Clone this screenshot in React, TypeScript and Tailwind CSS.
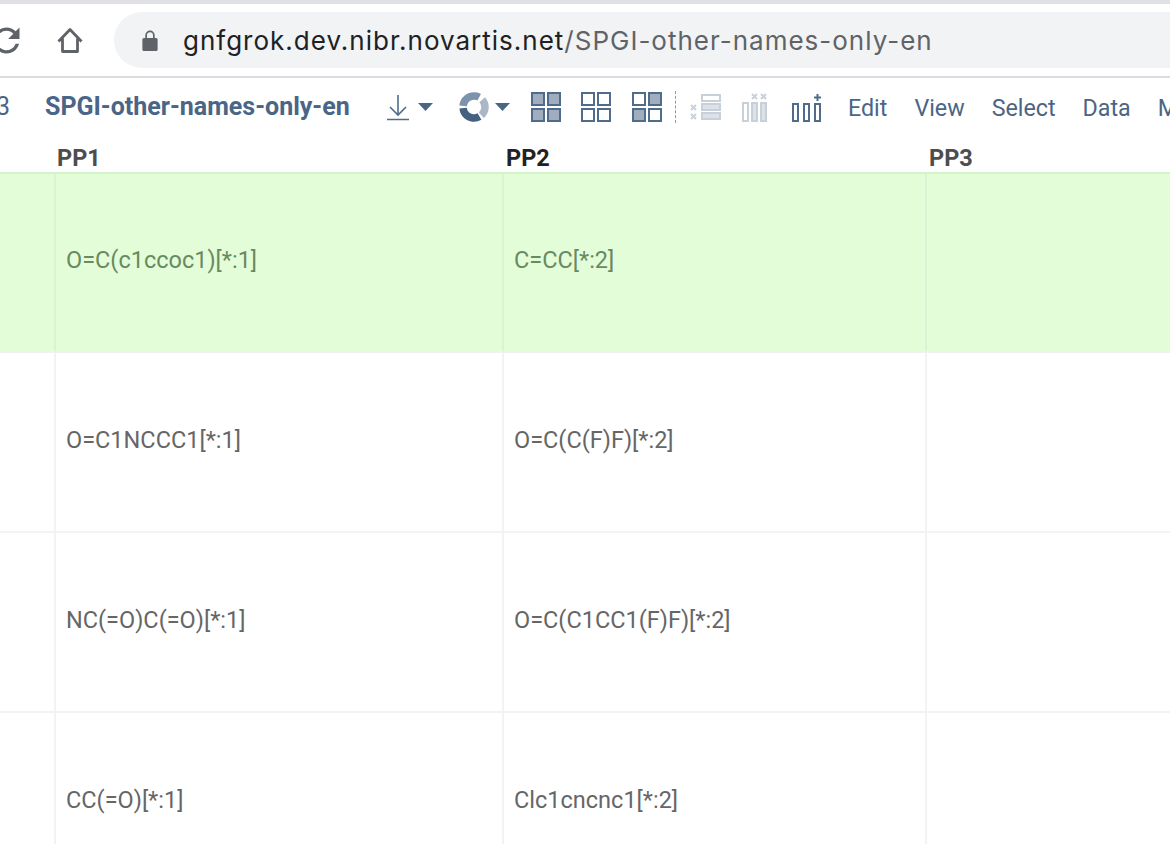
const rows = [
  { pp1: 'O=C(c1ccoc1)[*:1]', pp2: 'C=CC[*:2]', selected: true },
  { pp1: 'O=C1NCCC1[*:1]', pp2: 'O=C(C(F)F)[*:2]' },
  { pp1: 'NC(=O)C(=O)[*:1]', pp2: 'O=C(C1CC1(F)F)[*:2]' },
  { pp1: 'CC(=O)[*:1]', pp2: 'Clc1cncnc1[*:2]' },
];

const Caret = () => (
  <svg width="15" height="8" viewBox="0 0 15 8" className="fill-[#4a6585] shrink-0">
    <path d="M0 0h15L7.5 8z" />
  </svg>
);

// fill: which of the four cells are shaded
const GridIcon = ({ fill }: { fill: boolean[] }) => (
  <svg width="30" height="30" viewBox="0 0 30 30" className="shrink-0">
    {[[1, 1], [17, 1], [1, 17], [17, 17]].map(([x, y], i) => (
      <rect key={i} x={x} y={y} width="12" height="12" fill={fill[i] ? '#9fadbf' : '#fff'} stroke="#4f6c8c" strokeWidth="2" />
    ))}
  </svg>
);

export default function App() {
  return (
    <div className="w-[1170px] h-[844px] overflow-hidden bg-white font-['Roboto',sans-serif]">
      <div className="h-[4px] bg-[#dfe1e5]" />

      {/* browser bar */}
      <div className="h-[74px] flex items-center border-b-2 border-[#dadce0]">
        <svg width="39" height="39" viewBox="0 0 24 24" className="-ml-[13px] shrink-0 fill-[#5f6368]">
          <path d="M17.65 6.35A7.96 7.96 0 0 0 12 4a8 8 0 1 0 7.73 10h-2.08A6 6 0 1 1 12 6c1.66 0 3.14.69 4.22 1.78L13 11h7V4z" />
        </svg>
        <svg width="26" height="26" viewBox="0 0 26 26" fill="none" stroke="#5f6368" strokeWidth="2.8" strokeLinejoin="round" className="ml-[31px] shrink-0">
          <path d="M1.5 14.5 13 2.5l11.5 12M5.5 11.5v13h15v-13" />
        </svg>
        <div className="ml-[31px] h-[56px] flex-1 mr-[-40px] rounded-l-[28px] bg-[#f1f3f4] flex items-center pl-[28px]">
          <svg width="16" height="21" viewBox="0 0 17 21" preserveAspectRatio="none" className="fill-[#5f6368] shrink-0">
            <path d="M2 8h1.5V5.5a5 5 0 0 1 10 0V8H15a1.6 1.6 0 0 1 1.6 1.6v9.8A1.6 1.6 0 0 1 15 21H2a1.6 1.6 0 0 1-1.6-1.6V9.6A1.6 1.6 0 0 1 2 8zm3.3 0h6.4V5.5a3.2 3.2 0 0 0-6.4 0z" />
          </svg>
          <span className="ml-[25px] font-['Inter',sans-serif] text-[26px] tracking-[1px] text-[#202124] whitespace-nowrap">
            gnfgrok.dev.nibr.novartis.net<span className="text-[#5f6368]">/SPGI-other-names-only-en</span>
          </span>
        </div>
      </div>

      {/* app toolbar */}
      <div className="h-[60px] flex items-center whitespace-nowrap text-[#4a6585] pb-[3px]">
        <span className="shrink-0 w-[49px] -ml-[4px] text-[25px]">3</span>
        <span className="shrink-0 w-[341px] text-[25px] font-bold">SPGI-other-names-only-en</span>
        <svg width="24" height="28" viewBox="0 0 24 28" fill="none" stroke="#4f6c8c" strokeWidth="1.6" className="shrink-0">
          <path d="M12 2v20M4 14l8 8 8-8M1 26.5h22" />
        </svg>
        <span className="ml-[8px] flex shrink-0"><Caret /></span>
        <svg width="30" height="30" viewBox="0 0 30 30" fill="none" strokeWidth="7.5" className="ml-[26px] shrink-0">
          <circle cx="15" cy="15" r="11" pathLength="360" stroke="#7d93ab" strokeDasharray="112 248" transform="rotate(186 15 15)" />
          <circle cx="15" cy="15" r="11" pathLength="360" stroke="#a9b7c7" strokeDasharray="90 270" transform="rotate(-42 15 15)" />
          <circle cx="15" cy="15" r="11" pathLength="360" stroke="#44617f" strokeDasharray="114 246" transform="rotate(60 15 15)" />
        </svg>
        <span className="ml-[6px] flex shrink-0"><Caret /></span>
        <div className="ml-[21px] flex gap-[20px] shrink-0">
          <GridIcon fill={[true, true, true, true]} />
          <GridIcon fill={[false, false, false, false]} />
          <span className="ml-[1px] flex"><GridIcon fill={[false, true, true, false]} /></span>
        </div>
        <div className="ml-[13px] h-[32px] shrink-0 border-l border-dashed border-[#8a97a6]" />
        <svg width="32" height="30" viewBox="0 0 32 30" fill="none" className="ml-[14px] mt-[3px] shrink-0">
          <g stroke="#c8d0da" strokeWidth="2">
            <rect x="12" y="2" width="18" height="6" fill="#fff" />
            <rect x="12" y="11" width="18" height="6" fill="#dde2e8" />
            <rect x="12" y="20" width="18" height="6" fill="#dde2e8" />
            <path d="M1 12l5 5M6 12l-5 5M1 21l5 5M6 21l-5 5" />
          </g>
        </svg>
        <svg width="26" height="30" viewBox="0 0 26 30" fill="none" className="ml-[20px] mt-[3px] shrink-0">
          <g stroke="#c8d0da" strokeWidth="2">
            <rect x="1" y="10" width="5" height="18" fill="#fff" />
            <rect x="10" y="10" width="5" height="18" fill="#dde2e8" />
            <rect x="19" y="10" width="5" height="18" fill="#dde2e8" />
            <path d="M10 1l5 5M15 1l-5 5M19 1l5 5M24 1l-5 5" />
          </g>
        </svg>
        <svg width="31" height="30" viewBox="0 0 31 30" fill="none" className="ml-[23px] mt-[3px] shrink-0">
          <g stroke="#4f6c8c" strokeWidth="2">
            <rect x="2" y="11" width="5" height="17" />
            <rect x="13" y="11" width="5" height="17" />
            <rect x="24" y="11" width="5" height="17" />
            <path d="M26.5 1v7M23 4.5h7" />
          </g>
        </svg>
        <div className="ml-[26px] mt-[3px] flex gap-[27px] text-[23.25px] shrink-0">
          <span>Edit</span>
          <span>View</span>
          <span>Select</span>
          <span>Data</span>
          <span>ML</span>
        </div>
      </div>

      {/* grid header */}
      <div className="h-[34px] flex items-center font-bold text-[23.5px] text-[#4d4d4d] pt-[8px]">
        <div className="w-[56px]" />
        <div className="w-[448px] pl-[1px]">PP1</div>
        <div className="w-[423px] pl-[2px] text-[#222]">PP2</div>
        <div className="pl-[2px]">PP3</div>
      </div>

      {rows.map((row) => (
        <div
          key={row.pp1}
          className={`flex border-b-2 text-[23.5px] ${row.selected ? 'h-[181px] border-t-2 border-t-[#d4f3c8] bg-[#e2fdd8] text-[#698a5f] border-b-[#f0f2ef]' : 'h-[180px] text-[#666] border-b-[#f2f3f5]'}`}
        >
          <div className={`w-[56px] border-r-2 ${row.selected ? 'border-[#dcf2d5]' : 'border-[#f2f3f5]'}`} />
          <div className={`w-[448px] flex items-center pl-[10px] border-r-2 ${row.selected ? 'pb-[4px] border-[#dcf2d5]' : 'pb-[2px] border-[#f2f3f5]'}`}>{row.pp1}</div>
          <div className={`w-[423px] flex items-center pl-[10px] border-r-2 ${row.selected ? 'pb-[4px] border-[#dcf2d5]' : 'pb-[2px] border-[#f2f3f5]'}`}>{row.pp2}</div>
          <div className="flex-1" />
        </div>
      ))}
    </div>
  );
}
